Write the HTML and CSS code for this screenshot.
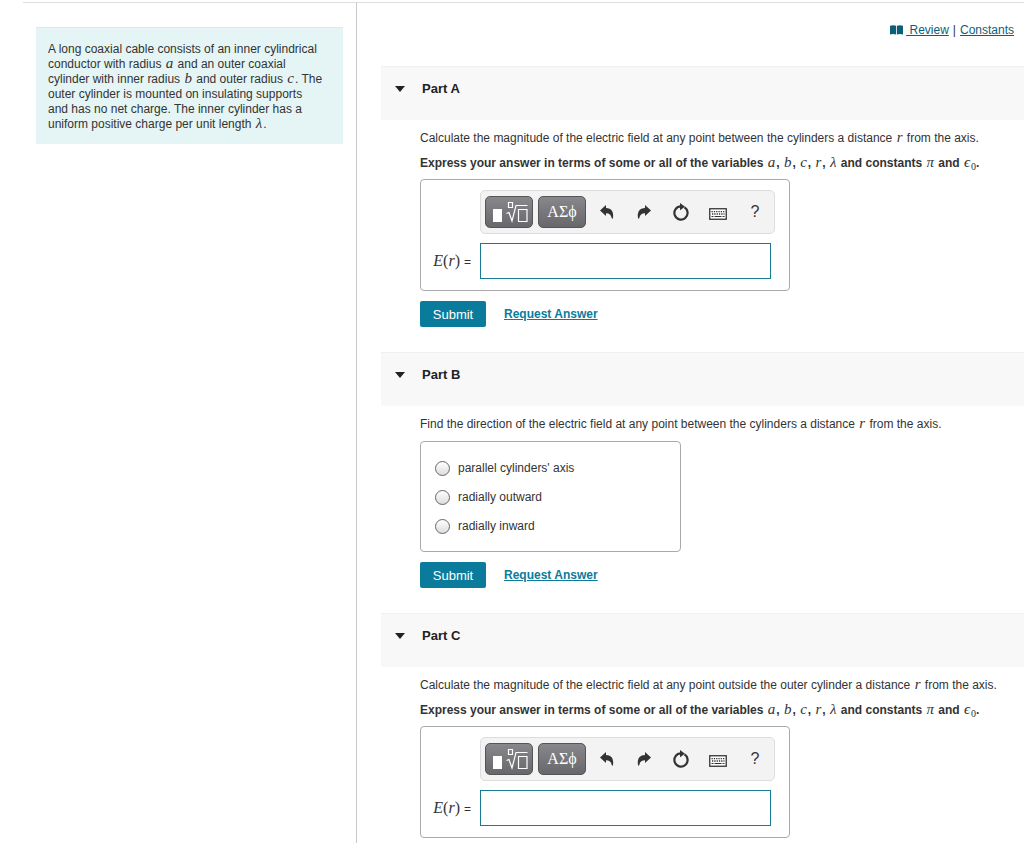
FILE: index.html
```
<!DOCTYPE html>
<html lang="en">
<head>
    <meta charset="UTF-8">
    <meta name="viewport" content="width=device-width, initial-scale=1.0">
    <title>Coaxial Cable</title>
    <link rel="stylesheet" href="styles.css">
</head>
<body>
    <!-- Shared icons -->
    <svg class="sprite" aria-hidden="true">
        <symbol id="icon-template" viewBox="0 0 38 22">
            <rect x="3" y="8" width="9" height="13" fill="#fff"/>
            <path d="M18.500 1.500h4v5h-4z M16.500 12.500l2.500-1 3 8.500 4-15.500h11.500 M28.500 8.500h8.500v12h-8.500z" fill="none" stroke="#fff" stroke-width="1.200"/>
        </symbol>
        <symbol id="icon-undo" viewBox="0 0 14 14">
            <path d="M0 5.500L6 0v3c5.500 0 8 4 7 10-.3 1-1 1-1.300 0C11 9.700 9.500 8.200 6 8.200V11z" fill="#333"/>
        </symbol>
        <symbol id="icon-redo" viewBox="0 0 14 14">
            <path d="M14 5.500L8 0v3C2.500 3 0 7 1 13c.3 1 1 1 1.300 0C3 9.700 4.500 8.200 8 8.200V11z" fill="#333"/>
        </symbol>
        <symbol id="icon-reset" viewBox="0 0 18 18">
            <path d="M12.500 4.400A6.600 6.600 0 1 1 9 3.400" fill="none" stroke="#333" stroke-width="2.200"/>
            <path d="M8 0l5 3.700-5 3.600z" fill="#333"/>
        </symbol>
        <symbol id="icon-keyboard" viewBox="0 0 18 12">
            <rect x=".75" y=".75" width="16.500" height="10.500" fill="#fff" stroke="#333" stroke-width="1.300"/>
            <path d="M2.500 3.700h13M3 6h12.500" stroke="#333" stroke-width="1.300" stroke-dasharray="1.300 1"/>
            <path d="M2.500 8.500h2M5.500 8.500h7M13.500 8.500h2" stroke="#333" stroke-width="1.200"/>
        </symbol>
        <symbol id="icon-book" viewBox="0 0 13 10">
            <path d="M0 .8q3.500-1 6.100 0v8.700q-3-.8-6.100 0zM6.900 .8q3-1 6.100 0v8.700q-3-.8-6.100 0z" fill="#0b6079"/>
        </symbol>
    </svg>

    <div class="page">
        <aside class="sidebar">
            <p class="intro">A long coaxial cable consists of an inner cylindrical conductor with radius <i>a</i> and an outer coaxial cylinder with inner radius <i>b</i> and outer radius <i>c</i>. The outer cylinder is mounted on insulating supports and has no net charge. The inner cylinder has a uniform positive charge per unit length <i>λ</i>.</p>
        </aside>

        <main class="content">
            <nav class="resources">
                <svg class="book" width="13" height="10"><use href="#icon-book"/></svg>
                <a href="#review">&nbsp;Review</a><span class="divider">|</span><a href="#constants">Constants</a>
            </nav>

            <section class="part">
                <h2 class="part-header"><span class="arrow"></span>Part A</h2>
                <form class="part-body">
                    <p>Calculate the magnitude of the electric field at any point between the cylinders a distance <i>r</i> from the axis.</p>
                    <p class="instructions">Express your answer in terms of some or all of the variables <i>a</i>, <i>b</i>, <i>c</i>, <i>r</i>, <i>λ</i> and constants <i>π</i> and <i>ϵ</i><sub>0</sub>.</p>
                    <div class="answer-box">
                        <div class="toolbar">
                            <button type="button" class="tool dark" aria-label="Templates"><svg width="38" height="22"><use href="#icon-template"/></svg></button>
                            <button type="button" class="tool dark">ΑΣϕ</button>
                            <button type="button" class="tool" aria-label="Undo"><svg width="14" height="14"><use href="#icon-undo"/></svg></button>
                            <button type="button" class="tool" aria-label="Redo"><svg width="14" height="14"><use href="#icon-redo"/></svg></button>
                            <button type="button" class="tool" aria-label="Reset"><svg width="18" height="18"><use href="#icon-reset"/></svg></button>
                            <button type="button" class="tool keyboard" aria-label="Keyboard"><svg width="18" height="12"><use href="#icon-keyboard"/></svg></button>
                            <button type="button" class="tool">?</button>
                        </div>
                        <label for="answerA"><i>E</i>(<i>r</i>) <span>=</span></label>
                        <input type="text" id="answerA">
                    </div>
                    <div class="actions">
                        <button type="submit" class="submit">Submit</button>
                        <a href="#answer-a">Request Answer</a>
                    </div>
                </form>
            </section>

            <section class="part">
                <h2 class="part-header"><span class="arrow"></span>Part B</h2>
                <form class="part-body">
                    <p>Find the direction of the electric field at any point between the cylinders a distance <i>r</i> from the axis.</p>
                    <div class="choices">
                        <label><input type="radio" name="direction">parallel cylinders' axis</label>
                        <label><input type="radio" name="direction">radially outward</label>
                        <label><input type="radio" name="direction">radially inward</label>
                    </div>
                    <div class="actions">
                        <button type="submit" class="submit">Submit</button>
                        <a href="#answer-b">Request Answer</a>
                    </div>
                </form>
            </section>

            <section class="part">
                <h2 class="part-header"><span class="arrow"></span>Part C</h2>
                <form class="part-body">
                    <p>Calculate the magnitude of the electric field at any point outside the outer cylinder a distance <i>r</i> from the axis.</p>
                    <p class="instructions">Express your answer in terms of some or all of the variables <i>a</i>, <i>b</i>, <i>c</i>, <i>r</i>, <i>λ</i> and constants <i>π</i> and <i>ϵ</i><sub>0</sub>.</p>
                    <div class="answer-box">
                        <div class="toolbar">
                            <button type="button" class="tool dark" aria-label="Templates"><svg width="38" height="22"><use href="#icon-template"/></svg></button>
                            <button type="button" class="tool dark">ΑΣϕ</button>
                            <button type="button" class="tool" aria-label="Undo"><svg width="14" height="14"><use href="#icon-undo"/></svg></button>
                            <button type="button" class="tool" aria-label="Redo"><svg width="14" height="14"><use href="#icon-redo"/></svg></button>
                            <button type="button" class="tool" aria-label="Reset"><svg width="18" height="18"><use href="#icon-reset"/></svg></button>
                            <button type="button" class="tool keyboard" aria-label="Keyboard"><svg width="18" height="12"><use href="#icon-keyboard"/></svg></button>
                            <button type="button" class="tool">?</button>
                        </div>
                        <label for="answerC"><i>E</i>(<i>r</i>) <span>=</span></label>
                        <input type="text" id="answerC">
                    </div>
                </form>
            </section>
        </main>
    </div>
</body>
</html>
```
FILE: styles.css
```
:root {
    --teal: #0b7b9b;
    --link: #0b6079;
    --text: #333;
    --panel: #f8f8f8;
    --line: #aaa;
}

* {
    box-sizing: border-box;
    margin: 0;
    padding: 0;
}

body {
    font-family: "Liberation Sans", Arial, sans-serif;
    font-size: 12px;
    line-height: 16px;
    color: var(--text);
    background: #fff;
    min-height: 100vh;
    display: flex;
    flex-direction: column;
    padding: 2px 0 0 23px;
}

.sprite {
    display: none;
}

.page {
    flex: 1;
    display: flex;
    border-top: 1px solid #ddd;
}

.sidebar {
    width: 334px;
    flex-shrink: 0;
    padding: 24px 13px;
    border-right: 1px solid #c3c9cc;
}

.intro {
    padding: 14px 18px 12px 12px;
    line-height: 15px;
    background: #e5f5f5;
    border-top: 1px solid #dcebea;
}

i,
sub {
    font-family: "Liberation Serif", "Times New Roman", serif;
    font-weight: normal;
    line-height: 0;
}

p i {
    padding: 0 1px;
    font-size: 15px;
}

sub {
    font-size: 10px;
}

.content {
    flex: 1;
    min-width: 0;
    padding-left: 24px;
}

.resources {
    height: 63px;
    padding: 19px 10px 0 0;
    text-align: right;
}

.resources a {
    color: var(--link);
}

.divider {
    padding: 0 4px;
}

.book {
    vertical-align: -1px;
}

.part-header {
    display: flex;
    align-items: center;
    gap: 17px;
    height: 54px;
    padding: 0 14px 9px;
    color: #222;
    font-size: 13px;
    background: var(--panel);
    border-top: 1px solid #f0f0f0;
}

.arrow {
    border: 5px solid transparent;
    border-top: 6px solid #222;
    border-bottom: 0;
}

.part-body {
    padding: 10px 0 25px 39px;
}

.part:last-child .part-body {
    padding-bottom: 5px;
}

.part-body p {
    margin-bottom: 9px;
    white-space: nowrap;
}

.part-body .instructions {
    margin-bottom: 8px;
    font-weight: bold;
}

.answer-box {
    display: grid;
    grid-template-columns: 50px 295px;
    column-gap: 9px;
    row-gap: 9px;
    align-items: center;
    width: 370px;
    padding: 10px 0 11px;
    border: 1px solid var(--line);
    border-radius: 4px;
}

.toolbar {
    grid-column: 2;
    display: flex;
    align-items: center;
    gap: 5px;
    height: 44px;
    padding: 0 4px;
    background: #f3f3f3;
    border: 1px solid #ddd;
    border-radius: 5px;
}

.tool {
    display: flex;
    align-items: center;
    justify-content: center;
    flex-shrink: 0;
    width: 32px;
    height: 32px;
    border: 0;
    background: none;
    color: var(--text);
    font-family: "Liberation Sans", Arial, sans-serif;
    font-size: 16px;
    cursor: pointer;
}

.tool.dark {
    width: 48px;
    border: 1px solid #555;
    border-radius: 5px;
    background: linear-gradient(#88888c, #68686c);
    color: #fff;
    font-family: "Liberation Serif", "Times New Roman", serif;
}

.tool.keyboard {
    padding-top: 4px;
}

.answer-box label {
    text-align: right;
    font-family: "Liberation Serif", "Times New Roman", serif;
    font-size: 16px;
    white-space: nowrap;
}

.answer-box label span {
    font-family: "Liberation Sans", Arial, sans-serif;
    font-size: 12px;
}

.answer-box input {
    width: 291px;
    height: 36px;
    padding: 0 8px;
    font-size: 16px;
    border: 1px solid #187a94;
}

.actions {
    display: flex;
    align-items: center;
    gap: 18px;
    margin-top: 10px;
}

.submit {
    width: 66px;
    height: 26px;
    border: 0;
    border-radius: 2px;
    background: var(--teal);
    color: #fff;
    font-family: inherit;
    font-size: 13px;
    cursor: pointer;
}

.actions a {
    color: var(--teal);
    font-weight: bold;
}

.choices {
    display: flex;
    flex-direction: column;
    gap: 13px;
    width: 261px;
    padding: 18px 14px 17px;
    border: 1px solid var(--line);
    border-radius: 4px;
}

.choices label {
    display: flex;
    align-items: center;
    gap: 8px;
}

.choices input {
    appearance: none;
    width: 15px;
    height: 15px;
    border: 1px solid #666;
    border-radius: 50%;
    background: linear-gradient(#fff, #ddd);
}

.choices input:checked {
    background: radial-gradient(#333 35%, #eee 40%);
}
```
